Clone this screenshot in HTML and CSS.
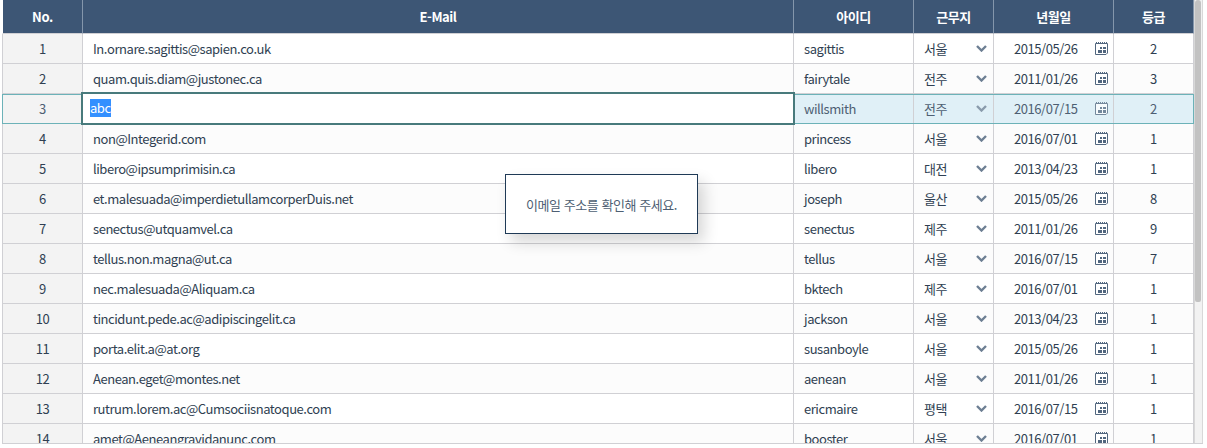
FILE: index.html
```html
<!DOCTYPE html>
<html lang="ko">

<head>
  <meta charset="UTF-8" />
  <title>그리드 편집</title>
  <link rel="stylesheet" href="styles.css">
</head>

<body>
  <div class="grid-wrap">
    <div class="grid">
      <div class="grid-row head">
        <div class="cell no">No.</div>
        <div class="cell mail">E-Mail</div>
        <div class="cell id">아이디</div>
        <div class="cell city">근무지</div>
        <div class="cell date">년월일</div>
        <div class="cell grade">등급</div>
      </div>
      <div id="rows"></div>
    </div>
    <div class="scrollbar">
      <div class="thumb"></div>
    </div>
    <div class="toast">이메일 주소를 확인해 주세요.</div>
  </div>

  <script>
    const rows = [
      ["In.ornare.sagittis@sapien.co.uk", "sagittis", "서울", "2015/05/26", 2],
      ["quam.quis.diam@justonec.ca", "fairytale", "전주", "2011/01/26", 3],
      ["abc", "willsmith", "전주", "2016/07/15", 2],
      ["non@Integerid.com", "princess", "서울", "2016/07/01", 1],
      ["libero@ipsumprimisin.ca", "libero", "대전", "2013/04/23", 1],
      ["et.malesuada@imperdietullamcorperDuis.net", "joseph", "울산", "2015/05/26", 8],
      ["senectus@utquamvel.ca", "senectus", "제주", "2011/01/26", 9],
      ["tellus.non.magna@ut.ca", "tellus", "서울", "2016/07/15", 7],
      ["nec.malesuada@Aliquam.ca", "bktech", "제주", "2016/07/01", 1],
      ["tincidunt.pede.ac@adipiscingelit.ca", "jackson", "서울", "2013/04/23", 1],
      ["porta.elit.a@at.org", "susanboyle", "서울", "2015/05/26", 1],
      ["Aenean.eget@montes.net", "aenean", "서울", "2011/01/26", 1],
      ["rutrum.lorem.ac@Cumsociisnatoque.com", "ericmaire", "평택", "2016/07/15", 1],
      ["amet@Aeneangravidanunc.com", "booster", "서울", "2016/07/01", 1]
    ];

    const arrow = '<svg class="arrow" width="11" height="7" viewBox="0 0 11 7"><path d="M1 1l4.5 4.5L10 1" fill="none" stroke="#6d7f93" stroke-width="2.4"/></svg>';
    const calendar = '<svg class="calendar" width="15" height="14" viewBox="0 0 15 14">' +
      '<path d="M1.5 1.5h12v9.5l-1.500 1.500h-10.500z" fill="#fff" stroke="#51667e"/>' +
      '<path d="M2 1h11" stroke="#51667e" stroke-width="2" stroke-dasharray="1 1"/>' +
      '<path d="M6 5h2v2h-2zM9 5h3v2h-3zM4 8h4v3h-4zM9 8h3v3h-3z" fill="#51667e"/>' +
      '</svg>';

    let html = "";
    rows.forEach((r, i) => {
      const editing = i === 2;
      const mail = editing
        ? '<div class="editor"><span class="selected">abc</span></div>'
        : r[0];
      html += `<div class="grid-row${editing ? " current" : ""}">
        <div class="cell no">${i + 1}</div>
        <div class="cell mail">${mail}</div>
        <div class="cell id">${r[1]}</div>
        <div class="cell city">${r[2]}${arrow}</div>
        <div class="cell date">${r[3]}${calendar}</div>
        <div class="cell grade">${r[4]}</div>
      </div>`;
    });
    document.getElementById("rows").innerHTML = html;
  </script>
</body>

</html>
```

FILE: styles.css
```css
* {
  box-sizing: border-box;
}

html,
body {
  height: 100%;
  overflow: hidden;
}

body {
  margin: 0;
  background-color: #fff;
  font-family: "Noto Sans CJK KR", "Noto Sans", sans-serif;
  font-size: 13px;
  letter-spacing: -0.45px;
  color: #2f3f52;
}

.grid-wrap {
  position: relative;
  display: flex;
  width: 1201px;
  height: 444px;
  margin-left: 2px;
  border-bottom: 1px solid #d0d0d4;
  overflow: hidden;
}

.grid {
  width: 1192px;
  flex: none;
}

.grid-row {
  position: relative;
  display: grid;
  grid-template-columns: 81px 711px 120px 80px 120px 80px;
  height: 30px;
  background-color: #fff;
}

.grid-row:nth-child(even) {
  background-color: #fcfcfc;
}

.cell {
  display: flex;
  align-items: center;
  padding-bottom: 1px;
  border-right: 1px solid #d0d0d4;
  border-bottom: 1px solid #d0d0d4;
  white-space: nowrap;
}

.cell.no,
.cell.grade {
  justify-content: center;
}

.cell.no {
  background-color: #f3f3f3;
  border-left: 1px solid #d0d0d4;
}

.cell.mail,
.cell.id {
  padding-left: 10px;
}

.cell.city {
  justify-content: space-between;
  padding: 0 6px 1px 10px;
}

.cell.date {
  justify-content: space-between;
  padding: 0 4px 1px 20px;
}

.head {
  height: 34px;
  background-color: #3d5675;
}

.head .cell {
  justify-content: center;
  padding: 0 0 1px;
  background-color: #3d5675;
  color: #fff;
  font-weight: 700;
  border-right-color: #8496ab;
  border-bottom-color: #d0d0d4;
}

.head .no {
  border-left-color: #fff;
}

.calendar {
  margin-top: 1px;
}

/* 편집 중인 행 */
.current {
  background-color: #e0f0f7 !important;
  color: #4e5f73;
  outline: 1px solid #6cb2b8;
  outline-offset: -1px;
  z-index: 1;
}

.current .cell {
  border-bottom-color: transparent;
}

.current .no {
  background-color: #f3f3f3;
  border-left-color: transparent;
}

.current .mail {
  position: relative;
}

.current svg {
  opacity: 0.75;
}

.editor {
  position: absolute;
  left: -2px;
  right: -2px;
  top: -2px;
  bottom: -2px;
  display: flex;
  align-items: center;
  padding-left: 7px;
  padding-bottom: 1px;
  background-color: #fff;
  border: 2px solid #487a7c;
}

.selected {
  background-color: #3390ff;
  color: #fff;
  line-height: 18px;
}

.scrollbar {
  width: 9px;
  flex: none;
  background-color: #f2f2f2;
  border-left: 1px solid #d8d8d8;
  border-right: 1px solid #d8d8d8;
}

.thumb {
  width: 6px;
  height: 302px;
  background-color: #c2c2c2;
  border-radius: 3px 3px 2px 2px;
}

.toast {
  position: absolute;
  left: 503px;
  top: 174px;
  width: 193px;
  height: 60px;
  display: flex;
  align-items: center;
  justify-content: center;
  background-color: #fff;
  border: 1px solid #1f3a56;
  box-shadow: 6px 8px 14px rgba(0, 0, 0, 0.16);
  color: #4e5f73;
  z-index: 2;
}
```
